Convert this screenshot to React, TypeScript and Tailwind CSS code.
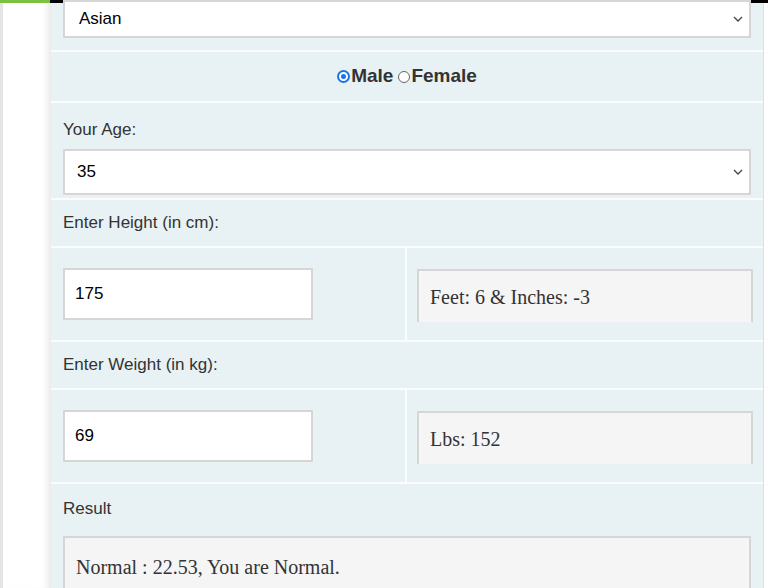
import React from "react";

const Chev = () => (
  <svg width="10" height="6" viewBox="0 0 10 6" className="absolute right-[6px] top-1/2 -translate-y-1/2"><path d="M1 1l4 4 4-4" stroke="#444" strokeWidth="1.3" fill="none" /></svg>
);

export default function App() {
  const sans = { fontFamily: '"Liberation Sans", Arial, sans-serif' };
  const serif = { fontFamily: '"Liberation Serif", Georgia, serif' };
  return (
    <div className="w-[768px] h-[588px] overflow-hidden bg-white relative" style={sans}>
      <div className="flex h-[3px]"><div className="w-[50px] bg-[#7cc242]" /><div className="flex-1 bg-black" /></div>
      <div className="flex h-[585px]">
        <div className="w-[51px] bg-white shadow-[inset_-8px_0_8px_-6px_rgba(0,0,0,0.12)] border-l-[3px] border-[#e5e5e5]" />
        <div className="w-[712px] bg-[#e8f1f3] text-[#333] flex flex-col">
          <div className="h-[49px] shrink-0 border-b-2 border-white/80 px-[12px]">
            <div className="relative h-[38px] -mt-[3px] bg-white border-2 border-[#d6d6d6] flex items-center pl-[14px] text-[17px] text-black">Asian<Chev /></div>
          </div>
          <div className="h-[51px] shrink-0 border-b-2 border-white/80 flex items-center justify-center text-[19px] font-bold">
            <span className="inline-flex items-center justify-center w-[13px] h-[13px] rounded-full bg-[#1a73e8] mr-[1px]"><span className="w-[9px] h-[9px] rounded-full border-2 border-white bg-[#1a73e8]" /></span>Male
            <span className="inline-block w-[12px] h-[12px] rounded-full border border-[#666] bg-white ml-[5px] mr-[1px]" />Female
          </div>
          <div className="h-[97px] shrink-0 border-b-2 border-white/80 px-[12px] pt-[14px] text-[17px]">
            <div className="mb-[6px]">Your Age:</div>
            <div className="relative h-[46px] bg-white border-2 border-[#d6d6d6] flex items-center pl-[12px] text-black">35<Chev /></div>
          </div>
          <div className="h-[48px] shrink-0 border-b-2 border-white/80 px-[12px] flex items-center text-[17px]">Enter Height (in cm):</div>
          <div className="h-[94px] shrink-0 border-b-2 border-white/80 flex">
            <div className="w-[356px] border-r-2 border-white/80 px-[12px] flex items-center">
              <div className="w-[250px] h-[52px] bg-white border-2 border-[#d6d6d6] flex items-center pl-[10px] text-[17px] text-black">175</div>
            </div>
            <div className="flex-1 px-[10px] pt-[21px]">
              <div className="h-[53px] bg-[#f5f5f5] border-2 border-b-0 border-[#d6d6d6] flex items-center pl-[11px] text-[20px]" style={serif}>Feet: 6 &amp; Inches: -3</div>
            </div>
          </div>
          <div className="h-[48px] shrink-0 border-b-2 border-white/80 px-[12px] flex items-center text-[17px]">Enter Weight (in kg):</div>
          <div className="h-[94px] shrink-0 border-b-2 border-white/80 flex">
            <div className="w-[356px] border-r-2 border-white/80 px-[12px] flex items-center">
              <div className="w-[250px] h-[52px] bg-white border-2 border-[#d6d6d6] flex items-center pl-[10px] text-[17px] text-black">69</div>
            </div>
            <div className="flex-1 px-[10px] pt-[21px]">
              <div className="h-[53px] bg-[#f5f5f5] border-2 border-b-0 border-[#d6d6d6] flex items-center pl-[11px] text-[20px]" style={serif}>Lbs: 152</div>
            </div>
          </div>
          <div className="flex-1 px-[12px] pt-[12px]">
            <div className="text-[17px] mb-[14px]">Result</div>
            <div className="h-[60px] bg-[#f5f5f5] border-2 border-b-0 border-[#d6d6d6] flex items-center pl-[11px] text-[20px]" style={serif}>Normal : 22.53, You are Normal.</div>
          </div>
        </div>
        <div className="flex-1 bg-white border-l border-[#e0e0e0]" />
      </div>
    </div>
  );
}
